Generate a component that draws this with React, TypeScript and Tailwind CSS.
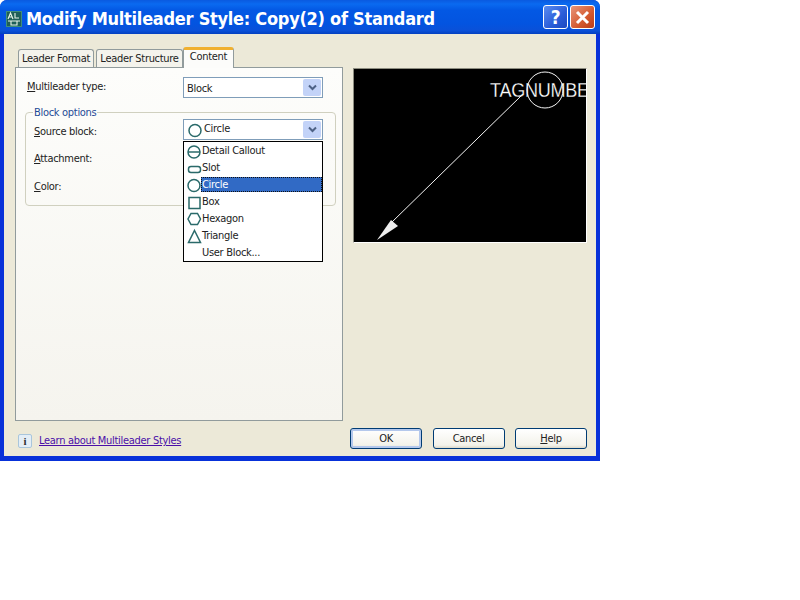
const tabBase =
  "flex items-center justify-center whitespace-nowrap rounded-t-[3px] border border-b-0 border-[#919b9c]";

const teal = "#2a6a6a";

const listItems = [
  { name: "Detail Callout", icon: "callout" },
  { name: "Slot", icon: "slot" },
  { name: "Circle", icon: "circle" },
  { name: "Box", icon: "box" },
  { name: "Hexagon", icon: "hexagon" },
  { name: "Triangle", icon: "triangle" },
  { name: "User Block...", icon: "" },
];

function BlockIcon({ kind }: { kind: string }) {
  return (
    <svg width="16" height="17" viewBox="0 0 16 17" fill="none" stroke={teal} strokeWidth="1.5" className="shrink-0">
      {kind === "callout" && (
        <>
          <circle cx="8" cy="10" r="6" />
          <path d="M2 10h12" />
        </>
      )}
      {kind === "slot" && <rect x="2.5" y="7.5" width="12" height="6" rx="2.5" />}
      {kind === "circle" && <circle cx="8" cy="9.5" r="6" />}
      {kind === "box" && <rect x="3" y="4.5" width="11" height="11" />}
      {kind === "hexagon" && <path d="M5 3.5h6.5l3 5.5-3 5.5H5L2 9z" />}
      {kind === "triangle" && <path d="M8.5 3.5l6 12H2.5z" />}
    </svg>
  );
}

function Chevron() {
  return (
    <span className="flex h-[17px] w-[18px] items-center justify-center rounded-[2px] bg-[#c3d3f8]">
      <svg width="9" height="7" viewBox="0 0 9 7" fill="none" stroke="#4d6185" strokeWidth="2">
        <path d="M1 1.5l3.5 3.5L8 1.5" />
      </svg>
    </span>
  );
}

function ComboBox({ children }: { children: React.ReactNode }) {
  return (
    <div className="flex h-[21px] w-[140px] items-center justify-between border border-[#7f9db9] bg-white pr-[1px]">
      {children}
      <Chevron />
    </div>
  );
}

function Button({ label, isDefault }: { label: React.ReactNode; isDefault?: boolean }) {
  return (
    <button
      className={`h-[21px] w-[72px] rounded-[3px] border border-[#003c74] bg-[linear-gradient(#ffffff,#f3f2ea_85%,#dcd8c8)] text-[#222] ${
        isDefault ? "shadow-[inset_0_0_0_2px_#b4c8ec]" : ""
      }`}
    >
      {label}
    </button>
  );
}

export default function App() {
  return (
    <div className="h-[600px] w-[800px] bg-white font-['DejaVu_Sans_Condensed','DejaVu_Sans',sans-serif] text-[11px] leading-[14px] tracking-[-0.3px] text-[#222]">
      <div className="flex h-[461px] w-[600px] flex-col rounded-t-[7px] bg-[#0831d9]">
        {/* title bar */}
        <div className="flex h-[34px] shrink-0 items-center rounded-t-[7px] bg-[linear-gradient(#0a5ae0,#0a6af0_12%,#0358e4_30%,#0354e0_70%,#0a50d8_90%,#0340c0)] pl-[6px] pr-[5px]">
          <svg width="16" height="16" viewBox="0 0 16 16" className="mt-[3px] shrink-0">
            <rect width="16" height="16" fill="#3f8f7a" />
            <rect x="1" y="1" width="14" height="14" fill="#1f5f58" />
            <path d="M2 8l2.5-6L7 8M3 6h3M9 2v5h4M2 10h12M5 10v4h6v-4" fill="none" stroke="#e8f4e8" strokeWidth="1.1" />
          </svg>
          <span className="mt-[3px] ml-[4px] text-[18px] leading-[24px] font-bold tracking-[-0.27px] whitespace-nowrap text-white">
            Modify Multileader Style: Copy(2) of Standard
          </span>
          <div className="ml-auto flex items-center gap-[2px]">
            <div className="flex h-[24px] w-[25px] items-center justify-center rounded-[3px] border border-white bg-[linear-gradient(135deg,#5a8cf0,#2a5cd8_60%,#1c48c0)] text-[19px] font-bold text-white">
              ?
            </div>
            <div className="flex h-[24px] w-[25px] items-center justify-center rounded-[3px] border border-white bg-[linear-gradient(135deg,#e8957a,#d4592f_60%,#b83c18)]">
              <svg width="15" height="15" viewBox="0 0 15 15" stroke="#fff" strokeWidth="3">
                <path d="M2 2l11 11M13 2L2 13" />
              </svg>
            </div>
          </div>
        </div>

        {/* dialog body */}
        <div className="mx-[4px] mb-[5px] flex flex-1 bg-[#ece9d8] pt-[13px] pl-[11px]">
          <div className="flex w-[328px] flex-col">
            <div className="relative z-10 flex h-[20px] items-end pl-[3px]">
              <div className={`${tabBase} mr-[2px] h-[18px] w-[76px] bg-[#f4f3ec]`}>Leader Format</div>
              <div className={`${tabBase} h-[18px] w-[87px] bg-[#f4f3ec]`}>Leader Structure</div>
              <div className="-mb-px flex h-[21px] w-[51px] items-center justify-center rounded-t-[3px] border-x border-[#919b9c] border-t-[3px] border-t-[#f0b030] bg-[#fcfcfa] pb-[5px]">
                Content
              </div>
            </div>

            <div className="relative flex h-[354px] flex-col border border-[#919b9c] bg-[linear-gradient(#fdfdfb,#f5f4ee)] pt-[9px] pl-[11px]">
              <div className="flex items-center">
                <span className="mb-[1px] w-[156px]">
                  <u>M</u>ultileader type:
                </span>
                <ComboBox>
                  <span className="pt-[2px] pl-[3px]">Block</span>
                </ComboBox>
              </div>

              <fieldset className="mt-[7px] ml-[-2px] h-[101px] w-[311px] rounded-[4px] border border-[#d0d0bf] pl-[8px]">
                <legend className="ml-[-1px] px-[1px] pt-px text-[#1f4a96]">Block options</legend>
                <div className="-mt-px flex items-center">
                  <span className="mt-[5px] w-[149px]">
                    <u>S</u>ource block:
                  </span>
                  <ComboBox>
                    <span className="flex items-center gap-[1px] pb-[1px] pl-[3px]">
                      <BlockIcon kind="circle" />
                      Circle
                    </span>
                  </ComboBox>
                </div>
                <p className="mt-[12px]">
                  <u>A</u>ttachment:
                </p>
                <p className="mt-[14px]">
                  <u>C</u>olor:
                </p>
              </fieldset>

              {/* open dropdown list */}
              <div className="absolute top-[73px] left-[167px] z-20 w-[140px] border border-black bg-white pl-[2px]">
                {listItems.map((item) => (
                  <div key={item.name} className="flex h-[17px] items-center">
                    {item.icon ? <BlockIcon kind={item.icon} /> : <span className="w-[16px]" />}
                    <span
                      className={
                        item.name === "Circle"
                          ? "-ml-px flex h-[15px] flex-1 items-center border border-dotted border-[#111] bg-[#316ac5] text-white"
                          : ""
                      }
                    >
                      {item.name}
                    </span>
                  </div>
                ))}
              </div>
            </div>

            <div className="mt-[13px] flex items-center pl-[3px]">
              <span className="flex h-[14px] w-[14px] items-center justify-center rounded-[2px] border border-[#a9c6dc] bg-[#e4eef6] font-['Liberation_Serif',serif] text-[11px] font-bold text-[#333]">
                i
              </span>
              <a className="ml-[7px] text-[#4b0fa8] underline">Learn about Multileader Styles</a>
            </div>
          </div>

          <div className="ml-[7px] flex w-[237px] flex-col">
            <div className="mt-[21px] ml-[3px] h-[175px] w-[234px] border border-t-[#8d8d80] border-r-white border-b-white border-l-[#8d8d80] bg-black">
              <svg width="232" height="173" viewBox="0 0 232 173">
                <text
                  transform="translate(136 28) scale(0.86 1)"
                  fontFamily="'Liberation Sans', sans-serif"
                  fontSize="21"
                  fill="#ffffff"
                  stroke="#000"
                  strokeWidth="0.25"
                >
                  TAGNUMBER
                </text>
                <circle cx="191" cy="21" r="18" fill="none" stroke="#f4f4f4" />
                <path d="M167 27L38 153" stroke="#f4f4f4" fill="none" />
                <path d="M23 171L37 151L44 157z" fill="#eeeeee" />
              </svg>
            </div>
            <div className="mt-[185px] flex gap-[10.5px]">
              <Button label="OK" isDefault />
              <Button label="Cancel" />
              <Button
                label={
                  <>
                    <u>H</u>elp
                  </>
                }
              />
            </div>
          </div>
        </div>
      </div>
    </div>
  );
}
